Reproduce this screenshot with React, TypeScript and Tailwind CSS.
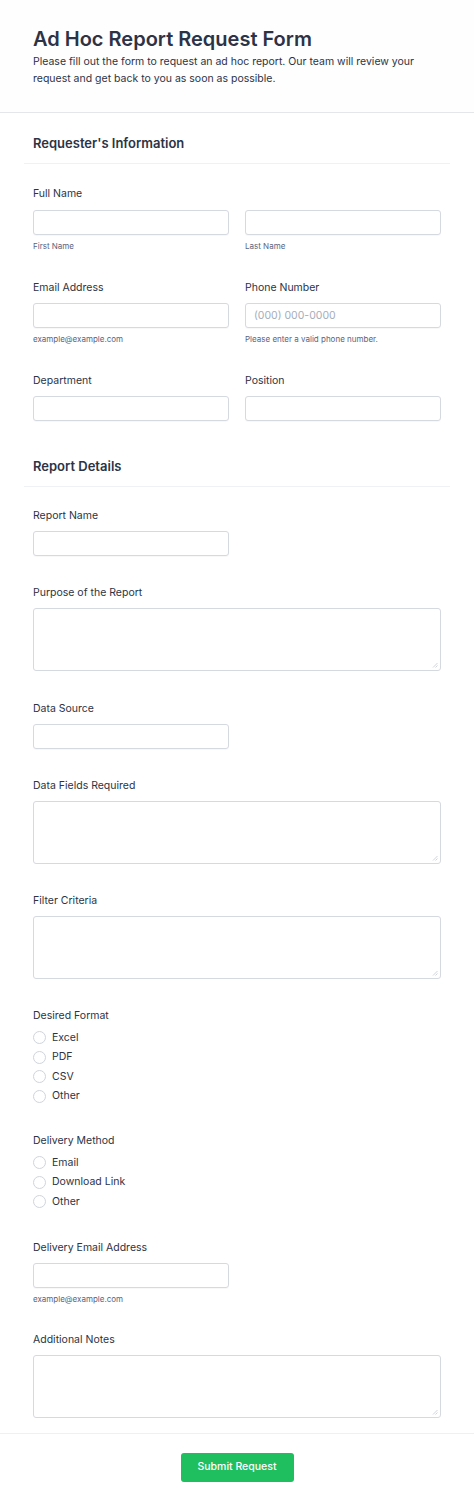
import type { ReactNode } from 'react';

const FONT = { fontFamily: 'Inter, "Noto Sans", Arial, sans-serif' };

function Label({ children }: { children: ReactNode }) {
  return <div className="text-[10.5px] leading-[14px] font-normal text-[#2c3345]">{children}</div>;
}

function Sub({ children }: { children: ReactNode }) {
  return <div className="mt-[5px] text-[8px] leading-[12px] text-[#57647e]">{children}</div>;
}

function TextInput({ placeholder }: { placeholder?: string }) {
  return (
    <input
      type="text"
      placeholder={placeholder}
      className="block h-[25px] w-full rounded-[3px] border border-[#d5d9e0] bg-white px-[8px] text-[10.5px] text-[#2c3345] placeholder:text-[#a5adbb] shadow-[0_1px_1px_rgba(0,0,0,0.03)] outline-none"
    />
  );
}

function TextArea() {
  return (
    <div className="relative">
      <textarea className="block h-[63px] w-full resize-none rounded-[3px] border border-[#d5d9e0] bg-white px-[8px] py-[6px] text-[10.5px] outline-none" />
      <svg className="absolute right-[3px] bottom-[3px] h-[6px] w-[6px]" viewBox="0 0 6 6">
        <path d="M5.5 1 L1 5.5 M5.5 3.5 L3.5 5.5" stroke="#c4c8d0" strokeWidth="0.8" fill="none" />
      </svg>
    </div>
  );
}

function SectionHeading({ title, top }: { title: string; top: string }) {
  return (
    <div className={`${top} border-b border-[#f0f1f4] px-[9px] pb-[10px]`}>
      <h2 className="text-[13px] leading-[20px] font-semibold text-[#2c3345]">{title}</h2>
    </div>
  );
}

function RadioGroup({ options }: { options: string[] }) {
  return (
    <div className="mt-[5px] flex flex-col">
      {options.map((o) => (
        <label key={o} className="flex h-[19.5px] items-center gap-[6px]">
          <span className="h-[13px] w-[13px] rounded-full border border-[#d0d4dc] bg-white" />
          <span className="text-[10.5px] text-[#2c3345]">{o}</span>
        </label>
      ))}
    </div>
  );
}

export default function App() {
  return (
    <div className="min-h-screen w-full bg-white" style={FONT}>
      <header className="border-b border-[#e4e6ea] bg-[#fefefe] px-[33px] pt-[27px] pb-[25px]">
        <h1 className="text-[20px] leading-[24px] font-semibold text-[#2c3345]">Ad Hoc Report Request Form</h1>
        <p className="mt-[2px] text-[10.5px] leading-[17px] text-[#2c3345]">
          Please fill out the form to request an ad hoc report. Our team will review your request and get back to you as soon as possible.
        </p>
      </header>

      <main className="px-[24px]">
        <SectionHeading title="Requester's Information" top="pt-[20px]" />

        <div className="px-[9px]">
          <div className="pt-[23px]">
            <Label>Full Name</Label>
            <div className="mt-[9px] grid grid-cols-2 gap-[16px]">
              <div>
                <TextInput />
                <Sub>First Name</Sub>
              </div>
              <div>
                <TextInput />
                <Sub>Last Name</Sub>
              </div>
            </div>
          </div>

          <div className="grid grid-cols-2 gap-[16px] pt-[29px]">
            <div>
              <Label>Email Address</Label>
              <div className="mt-[8px]">
                <TextInput />
              </div>
              <Sub>example@example.com</Sub>
            </div>
            <div>
              <Label>Phone Number</Label>
              <div className="mt-[8px]">
                <TextInput placeholder="(000) 000-0000" />
              </div>
              <Sub>Please enter a valid phone number.</Sub>
            </div>
          </div>

          <div className="grid grid-cols-2 gap-[16px] pt-[29px]">
            <div>
              <Label>Department</Label>
              <div className="mt-[8px]">
                <TextInput />
              </div>
            </div>
            <div>
              <Label>Position</Label>
              <div className="mt-[8px]">
                <TextInput />
              </div>
            </div>
          </div>
        </div>

        <SectionHeading title="Report Details" top="pt-[35px]" />

        <div className="px-[9px]">
          <div className="pt-[22px]">
            <Label>Report Name</Label>
            <div className="mt-[8px] w-[196px]">
              <TextInput />
            </div>
          </div>

          <div className="pt-[30px]">
            <Label>Purpose of the Report</Label>
            <div className="mt-[8px]">
              <TextArea />
            </div>
          </div>

          <div className="pt-[31px]">
            <Label>Data Source</Label>
            <div className="mt-[8px] w-[196px]">
              <TextInput />
            </div>
          </div>

          <div className="pt-[30px]">
            <Label>Data Fields Required</Label>
            <div className="mt-[8px]">
              <TextArea />
            </div>
          </div>

          <div className="pt-[30px]">
            <Label>Filter Criteria</Label>
            <div className="mt-[8px]">
              <TextArea />
            </div>
          </div>

          <div className="pt-[30px]">
            <Label>Desired Format</Label>
            <RadioGroup options={['Excel', 'PDF', 'CSV', 'Other']} />
          </div>

          <div className="pt-[28px]">
            <Label>Delivery Method</Label>
            <RadioGroup options={['Email', 'Download Link', 'Other']} />
          </div>

          <div className="pt-[29px]">
            <Label>Delivery Email Address</Label>
            <div className="mt-[8px] w-[196px]">
              <TextInput />
            </div>
            <Sub>example@example.com</Sub>
          </div>

          <div className="pt-[28px] pb-[15px]">
            <Label>Additional Notes</Label>
            <div className="mt-[8px]">
              <TextArea />
            </div>
          </div>
        </div>
      </main>

      <footer className="flex justify-center border-t border-[#eef0f3] pt-[19px] pb-[26px]">
        <button className="h-[29px] w-[113px] rounded-[3px] bg-[#1fbe5f] text-[10.5px] font-medium text-white">
          Submit Request
        </button>
      </footer>
    </div>
  );
}
